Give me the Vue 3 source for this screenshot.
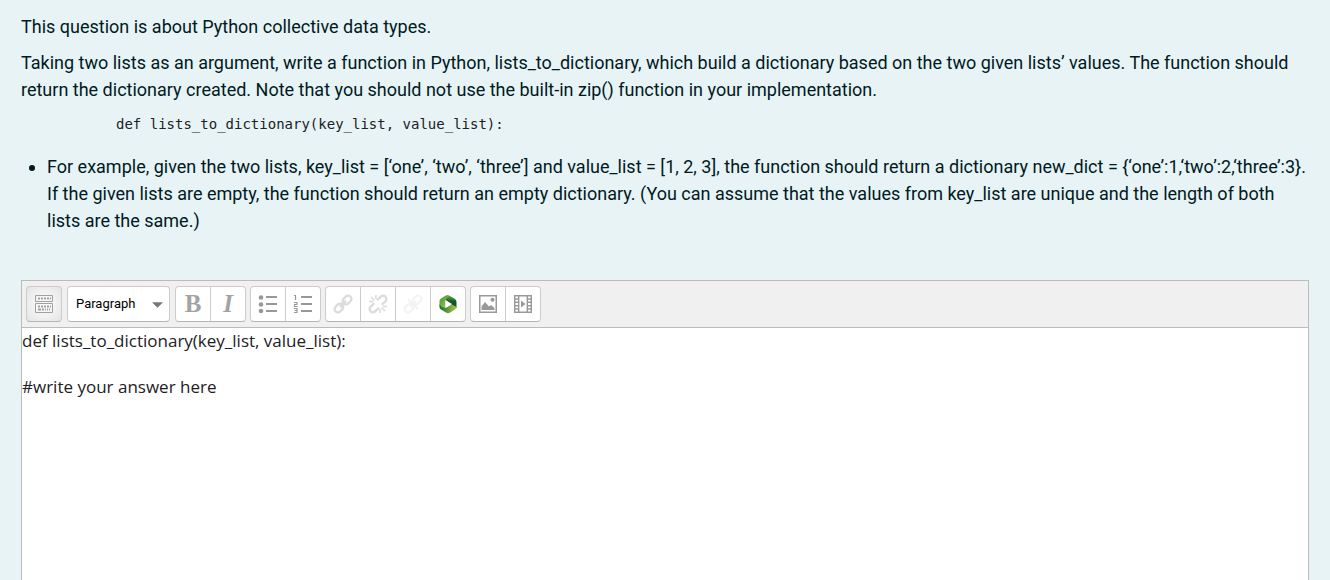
<script setup>
import { ref } from 'vue'

const format = ref('Paragraph')
const answer = ref('def lists_to_dictionary(key_list, value_list):\n\n#write your answer here')
</script>

<template>
  <main class="question">
    <p class="text">This question is about Python collective data types.</p>
    <p class="text">
      Taking two lists as an argument, write a function in Python, lists_to_dictionary, which build a
      dictionary based on the two given lists’ values. The function should return the dictionary
      created. Note that you should not use the built-in zip() function in your implementation.
    </p>
    <pre class="code"><code>def lists_to_dictionary(key_list, value_list):</code></pre>
    <ul class="notes">
      <li>
        For example, given the two lists, key_list = [‘one’, ‘two’, ‘three’] and value_list = [1, 2, 3],
        the function should return a dictionary new_dict = {‘one’:1,‘two’:2,‘three’:3}. If the given
        lists are empty, the function should return an empty dictionary. (You can assume that the
        values from key_list are unique and the length of both lists are the same.)
      </li>
    </ul>

    <section class="editor">
      <div class="toolbar" role="toolbar" aria-label="Editor">
        <div class="group toggle">
          <button type="button" aria-label="Toggle toolbar">
            <svg viewBox="0 0 20 20" fill="none" stroke="#a0a0a0">
              <path d="M1.500 1.500h17v6h-17zM1.500 9.500h17v9h-17z" />
              <path d="M4 4.500h13" stroke-width="2" stroke-dasharray="2 1" />
              <path d="M4 12.500h13" stroke-width="2" stroke-dasharray="2 1" />
              <path d="M4 15.500h3m1 0h2m1 0h1m1 0h1m1 0h1" stroke-width="2" />
            </svg>
          </button>
        </div>
        <div class="format">
          <select v-model="format" aria-label="Format">
            <option>Paragraph</option>
            <option>Heading</option>
            <option>Preformatted</option>
          </select>
          <svg class="arrow" viewBox="0 0 12 6"><path d="M0 0h12L6 6z" fill="#777" /></svg>
        </div>
        <div class="group">
          <button type="button" class="letter bold" aria-label="Bold">B</button>
          <button type="button" class="letter italic" aria-label="Italic">I</button>
        </div>
        <div class="group">
          <button type="button" aria-label="Unordered list">
            <svg viewBox="0 0 20 20" fill="#999">
              <circle cx="3" cy="3.500" r="2.300" /><circle cx="3" cy="10.500" r="2.300" /><circle cx="3" cy="17" r="2.300" />
              <path d="M8 2h11v2H8zM8 9h11v2H8zM8 16h11v2H8z" />
            </svg>
          </button>
          <button type="button" aria-label="Ordered list">
            <svg viewBox="0 0 20 20" fill="none" stroke="#999">
              <path d="M8 3h11M8 10h11M8 17h11" stroke-width="2" />
              <path d="M1 1.500h1.500V6M1 8.500h3v2H1.500v2H4.500M1 14.500h3v4H1M1.500 16.500H4" stroke-width="1.200" />
            </svg>
          </button>
        </div>
        <div class="group">
          <button type="button" aria-label="Link">
            <svg viewBox="0 0 20 20" fill="none" stroke="#dcdcdc" stroke-width="2.400">
              <g transform="rotate(-45 10 10)">
                <rect x="-.5" y="6.700" width="9.500" height="6.600" rx="3.300" />
                <rect x="11" y="6.700" width="9.500" height="6.600" rx="3.300" />
                <path d="M5.500 10h9" />
              </g>
            </svg>
          </button>
          <button type="button" aria-label="Unlink">
            <svg viewBox="0 0 20 20" fill="none" stroke="#dcdcdc" stroke-width="2.400">
              <g transform="rotate(-45 10 10)">
                <path d="M8 6.700H2.800a3.300 3.300 0 0 0 0 6.600H8M12 6.700h5.200a3.300 3.300 0 0 1 0 6.600H12" />
              </g>
              <path d="M3 3l3.500 3.500M8 1v4M1 7.500h4M17 17l-3.500-3.500M12 19v-4M19 12.500h-4" stroke-width="1.600" />
            </svg>
          </button>
          <button type="button" aria-label="Prevent automatic linking">
            <svg viewBox="0 0 20 20" fill="none" stroke="#f3f3f3" stroke-width="2.200">
              <g transform="rotate(-45 10 10)">
                <rect x="-.5" y="6.700" width="9.500" height="6.600" rx="3.300" />
                <rect x="11" y="6.700" width="9.500" height="6.600" rx="3.300" />
                <path d="M5.500 10h9" />
              </g>
              <path d="M5 5l10 10" stroke-width="2" />
            </svg>
          </button>
          <button type="button" aria-label="Panopto">
            <svg viewBox="0 0 20 20">
              <defs>
                <linearGradient id="panoptoLeft" x1="0" y1="0" x2="1" y2="1">
                  <stop offset="0" stop-color="#3f8f3c" />
                  <stop offset="1" stop-color="#a9cf4c" />
                </linearGradient>
                <linearGradient id="panoptoBottom" x1="0" y1="0" x2="1" y2="0">
                  <stop offset="0" stop-color="#1d6a30" />
                  <stop offset="1" stop-color="#a4cb49" />
                </linearGradient>
                <linearGradient id="panoptoRight" x1="0" y1="0" x2="0" y2="1">
                  <stop offset="0" stop-color="#6fae42" />
                  <stop offset=".5" stop-color="#14532c" />
                </linearGradient>
              </defs>
              <path d="M8 2Q10 .5 12 2l5 3q1.500 1 1.500 3v5.500q0 1-1 .5L11 9 6 5.500Q6 3 8 2z" fill="url(#panoptoRight)" />
              <path d="M7 2Q9 .7 11 2 7.500 4 7.500 8v5Q4 16 1.500 12V7q0-1.500 1.500-2.500z" fill="url(#panoptoLeft)" />
              <path d="M1.500 10Q3 14 7.500 13.500L14 10.500l4.500 2.500q0 1.500-1.500 2.500l-5 3q-2 1.300-4 0l-5-3Q1.500 14.500 1.500 13z" fill="url(#panoptoBottom)" />
              <path d="M7.500 6v8l6.500-4z" fill="#fff" />
            </svg>
          </button>
        </div>
        <div class="group">
          <button type="button" aria-label="Image">
            <svg viewBox="0 0 20 20" fill="#999">
              <path d="M1 1h18v18H1zM2.500 2.500v15h15v-15z" fill-rule="evenodd" />
              <path d="M3.500 16v-3.500l3.500-4.500 4 4.500 2-1.500 3.500 3V16z" />
              <circle cx="14.500" cy="5.800" r="2" />
            </svg>
          </button>
          <button type="button" aria-label="Media">
            <svg viewBox="0 0 20 20" fill="none" stroke="#999">
              <path d="M1.700 1.700h16.600v16.600H1.700zM5.700 1.700v16.600M14.300 1.700v16.600" stroke-width="1.400" />
              <path d="M1.700 5h4M1.700 8.300h4M1.700 11.700h4M1.700 15h4M14.300 5h4M14.300 8.300h4M14.300 11.700h4M14.300 15h4" stroke-width="1.400" />
              <path d="M8 6.500v7l4.500-3.500z" fill="#999" stroke="none" />
            </svg>
          </button>
        </div>
      </div>
      <textarea v-model="answer" class="answer" aria-label="Answer text" spellcheck="false"></textarea>
    </section>
  </main>
</template>

<style>
body {
  background: #e7f3f5;
}
</style>

<style scoped>
.question {
  display: flex;
  flex-direction: column;
  box-sizing: border-box;
  min-height: 100vh;
  padding: 13px 21px 0;
  background: #e7f3f5;
  color: #001a1e;
  font: 18px/27px Roboto, sans-serif;
}
.text {
  margin: 0 0 9px;
}
.code {
  margin: 0 0 17px;
  padding-left: 95px;
  font: 14px/24px "DejaVu Sans Mono", monospace;
  color: #1d2125;
}
.code code {
  font: inherit;
}
.notes {
  margin: 0 0 46px;
  padding-left: 26px;
}
.editor {
  display: flex;
  flex: 1;
  flex-direction: column;
  border: 1px solid #bbb;
  border-bottom: 0;
  background: #fff;
}
.toolbar {
  display: flex;
  flex-wrap: wrap;
  gap: 4px;
  padding: 5px 4px;
  border-bottom: 1px solid #bbb;
  background: #f0f0f0;
}
.group {
  display: flex;
  box-sizing: border-box;
  height: 36px;
  overflow: hidden;
  border: 1px solid #ccc;
  border-bottom-color: #b3b3b3;
  border-radius: 4px;
  background: #fff;
}
.group button {
  display: flex;
  align-items: center;
  justify-content: center;
  width: 34px;
  padding: 0;
  border: 0;
  background: none;
  color: #999;
}
.group button + button {
  width: 35px;
  border-left: 1px solid #ccc;
}
.group svg {
  width: 20px;
  height: 20px;
}
.toggle,
.format {
  margin-right: 1px;
}
.toggle {
  background: radial-gradient(#fff, #e4e4e4);
}
.group .letter {
  font: 25px/34px "Liberation Serif", serif;
}
.group .bold {
  font-weight: 700;
  color: #a3a3a3;
}
.group .italic {
  font-style: italic;
  font-weight: 700;
  color: #a3a3a3;
}
.format {
  position: relative;
}
.format select {
  appearance: none;
  box-sizing: border-box;
  width: 103px;
  height: 36px;
  padding: 0 24px 0 8px;
  border: 1px solid #ccc;
  border-bottom-color: #b3b3b3;
  border-radius: 4px;
  background: #fff;
  color: #000;
  font: 13px/20px Roboto, sans-serif;
}
.arrow {
  position: absolute;
  top: 16px;
  right: 7px;
  width: 11px;
  height: 6px;
  pointer-events: none;
}
.answer {
  flex: 1;
  box-sizing: border-box;
  width: 100%;
  padding: 1px 0 0;
  border: 0;
  outline: 0;
  resize: none;
  background: #fff;
  color: #1d2125;
  font: 17px/23px "Open Sans", "Noto Sans", sans-serif;
}
</style>
